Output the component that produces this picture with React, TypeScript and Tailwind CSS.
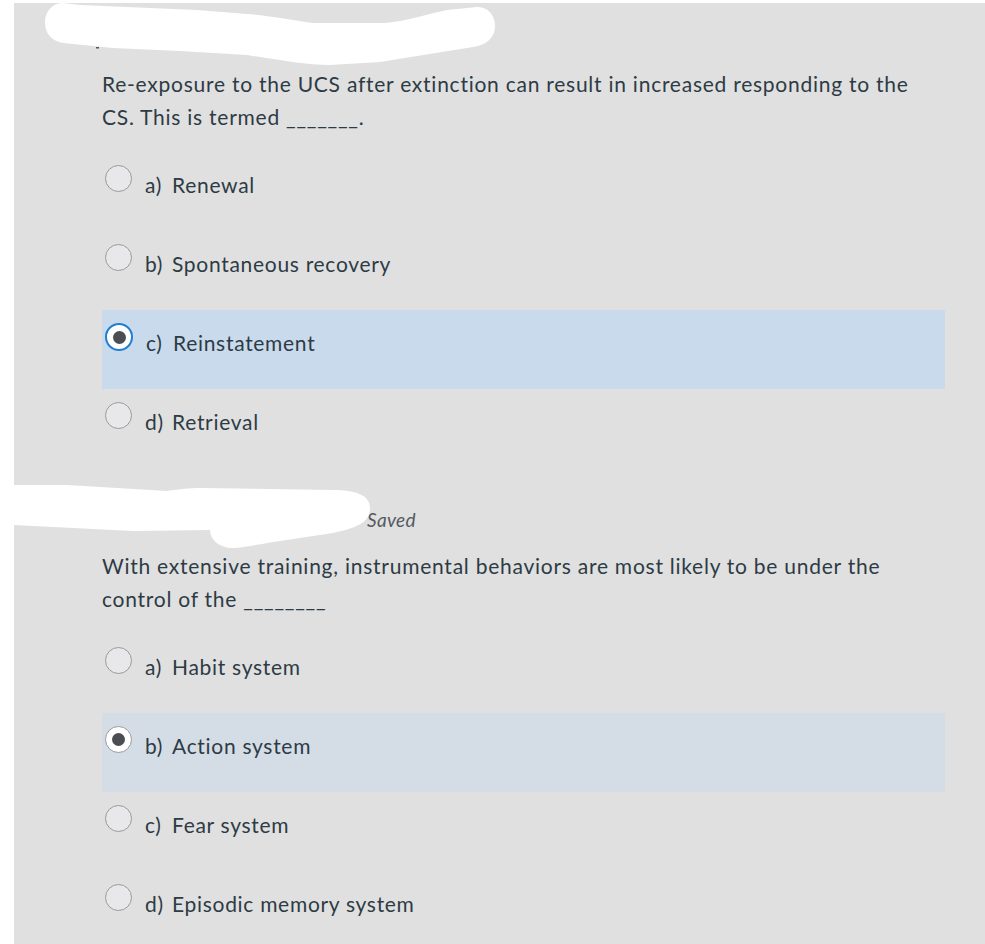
import React from 'react';

type Option = { key: string; label: string };

const q1: Option[] = [
  { key: 'a)', label: 'Renewal' },
  { key: 'b)', label: 'Spontaneous recovery' },
  { key: 'c)', label: 'Reinstatement' },
  { key: 'd)', label: 'Retrieval' },
];

const q2: Option[] = [
  { key: 'a)', label: 'Habit system' },
  { key: 'b)', label: 'Action system' },
  { key: 'c)', label: 'Fear system' },
  { key: 'd)', label: 'Episodic memory system' },
];

const Radio: React.FC<{ state: 'none' | 'focus' | 'checked' }> = ({ state }) => {
  if (state === 'focus') {
    return (
      <span className="flex h-[28px] w-[28px] shrink-0 items-center justify-center rounded-full border-2 border-[#1f7fd1] bg-white">
        <span className="block h-[13px] w-[13px] rounded-full bg-[#4a4d52]" />
      </span>
    );
  }
  if (state === 'checked') {
    return (
      <span className="flex h-[27px] w-[27px] shrink-0 items-center justify-center rounded-full border border-[#9a9a9a] bg-white">
        <span className="block h-[13px] w-[13px] rounded-full bg-[#4a4d52]" />
      </span>
    );
  }
  return <span className="block h-[27px] w-[27px] shrink-0 rounded-full border border-[#9a9a9a] bg-[#e8e8eb]" />;
};

const OptionRow: React.FC<{ opt: Option; state: 'none' | 'focus' | 'checked'; bg?: string }> = ({ opt, state, bg }) => (
  <div className={`flex h-[79px] items-start pl-[3px] ${bg ?? ''}`}>
    <div className="mt-[13px]">
      <Radio state={state} />
    </div>
    <div className="mt-[20px] ml-[13px] flex text-[21px] leading-[26px] tracking-[0.7px] text-[#2d3b45]">
      <span className="w-[27px]">{opt.key}</span>
      <span>{opt.label}</span>
    </div>
  </div>
);

export default function App() {
  return (
    <div className="relative h-[944px] w-[985px] overflow-hidden bg-white" style={{ fontFamily: 'Lato, "Open Sans", sans-serif' }}>
      <div className="ml-[14px] mt-[3px] h-[941px] bg-[#e0e0e0] pl-[88px] pr-[40px]">
        {/* question 1 */}
        <div className="h-[64px]" />
        <p className="max-w-[820px] text-[21px] leading-[33px] tracking-[0.75px] text-[#2d3b45]">
          Re-exposure to the UCS after extinction can result in increased responding to the CS. This is termed _______.
        </p>
        <div className="mt-[19px]">
          <OptionRow opt={q1[0]} state="none" />
          <OptionRow opt={q1[1]} state="none" />
          <OptionRow opt={q1[2]} state="focus" bg="bg-[#c8daeb]" />
          <OptionRow opt={q1[3]} state="none" />
        </div>

        {/* question 2 */}
        <div className="flex h-[81px] items-start">
          <span className="ml-[265px] mt-[39px] text-[19px] italic leading-[26px] tracking-[0.3px] text-[#555a5e]">Saved</span>
        </div>
        <p className="max-w-[820px] text-[21px] leading-[33px] tracking-[0.75px] text-[#2d3b45]">
          With extensive training, instrumental behaviors are most likely to be under the control of the ________
        </p>
        <div className="mt-[19px]">
          <OptionRow opt={q2[0]} state="none" />
          <OptionRow opt={q2[1]} state="checked" bg="bg-[#d4dde6]" />
          <OptionRow opt={q2[2]} state="none" />
          <OptionRow opt={q2[3]} state="none" />
        </div>
      </div>

      {/* redaction marks */}
      <svg className="pointer-events-none absolute left-0 top-0" width="985" height="944" viewBox="0 0 985 944">
        <path
          d="M63 3 C 54 3 45 10 45 22 C 45 34 52 41 63 43 L 113 48 L 180 51 L 247 55 C 280 60 305 65 330 65 L 380 62 L 473 47 C 487 45 495 37 495 26 C 495 14 487 7 477 7 L 447 10 C 420 16 400 23 380 23 L 313 23 C 290 20 265 15 247 14 L 197 10 L 80 5 Z"
          fill="#ffffff"
        />
        <rect x="96" y="47" width="3" height="1.5" fill="#555" />
        <path
          d="M0 485 L 67 485 L 167 491 C 180 489 190 488 200 488 L 333 490 C 355 490 370 495 370 508 C 370 520 362 527 333 533 L 267 543 C 250 546 240 548 233 548 C 220 548 210 540 210 530 L 133 531 L 14 525 L 0 525 Z"
          fill="#ffffff"
        />
      </svg>
    </div>
  );
}
